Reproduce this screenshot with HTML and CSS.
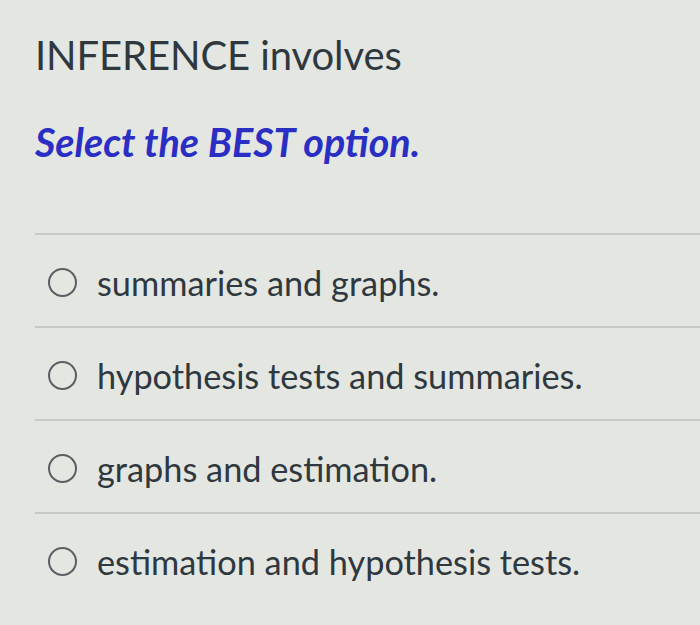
FILE: index.html
```html
<!DOCTYPE html>
<html>
<head>
<meta charset="utf-8">
<link rel="stylesheet" href="styles.css">
</head>
<body>
<div class="question">
  <h1 class="title">INFERENCE involves</h1>
  <p class="instruction">Select the BEST option.</p>
  <ul class="options">
    <li class="option"><span class="radio"></span><span class="label">summaries and graphs.</span></li>
    <li class="option"><span class="radio"></span><span class="label">hypothesis tests and summaries.</span></li>
    <li class="option"><span class="radio"></span><span class="label">graphs and estimation.</span></li>
    <li class="option"><span class="radio"></span><span class="label">estimation and hypothesis tests.</span></li>
  </ul>
</div>
</body>
</html>
```

FILE: styles.css
```css
html, body {
  margin: 0;
  padding: 0;
  background: #e4e6e2;
  height: 100%;
  overflow: hidden;
}
body {
  font-family: Lato, "Open Sans", sans-serif;
  color: #2e383e;
}
.question {
  padding: 27px 0 0 35px;
}
.title {
  margin: 0;
  font-weight: 400;
  font-size: 40px;
  line-height: 56px;
  letter-spacing: -0.1px;
}
.instruction {
  margin: 34px 0 0 0;
  font-size: 39.5px;
  line-height: 50px;
  font-weight: 700;
  font-style: italic;
  color: #2a2ec2;
}
.options {
  list-style: none;
  margin: 66px 0 0 0;
  padding: 0;
}
.option {
  display: flex;
  align-items: center;
  gap: 20px;
  height: 93px;
  border-top: 2px solid #c8cac6;
  padding: 4px 0 0 13px;
  box-sizing: border-box;
}
.radio {
  width: 25px;
  height: 25px;
  border: 2.5px solid #595f63;
  border-radius: 50%;
  flex: none;
}
.label {
  font-size: 34.3px;
  line-height: 40px;
}
```
